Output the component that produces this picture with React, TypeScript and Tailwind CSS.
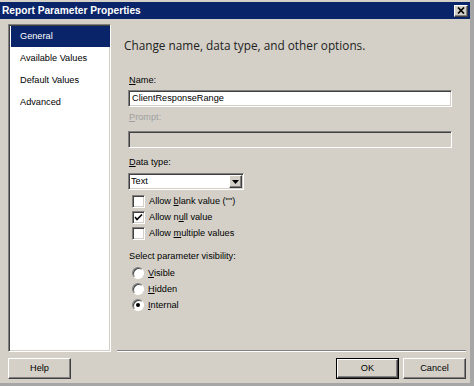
import React from 'react';

const raised =
  'border border-t-white border-l-white border-r-[#404040] border-b-[#404040] shadow-[inset_-1px_-1px_0_#808080]';
const sunken =
  'border border-t-[#808080] border-l-[#808080] border-r-white border-b-white shadow-[inset_1px_1px_0_#404040,inset_-1px_-1px_0_#d4d0c8]';

function U({ children }: { children: React.ReactNode }) {
  return <span className="underline underline-offset-[1px]">{children}</span>;
}

function Checkbox({ checked, children }: { checked?: boolean; children: React.ReactNode }) {
  return (
    <div className="flex h-[16px] items-center">
      <span className={`ml-[4px] flex h-[13px] w-[13px] shrink-0 items-center justify-center bg-white ${sunken}`}>
        {checked && (
          <svg width="9" height="9" viewBox="0 0 9 9" aria-hidden>
            <path d="M1 4 L3 6.5 L8 1.5" fill="none" stroke="#000" strokeWidth="1.6" />
          </svg>
        )}
      </span>
      <span className="ml-[4px]">{children}</span>
    </div>
  );
}

function Radio({ checked, children }: { checked?: boolean; children: React.ReactNode }) {
  return (
    <div className="flex h-[16px] items-center">
      <span className="ml-[4px] flex h-[12px] w-[12px] shrink-0 items-center justify-center rounded-full border border-t-[#808080] border-l-[#808080] border-r-white border-b-white bg-white shadow-[inset_1px_1px_0_#404040]">
        {checked && <span className="h-[4px] w-[4px] rounded-full bg-black" />}
      </span>
      <span className="ml-[4px]">{children}</span>
    </div>
  );
}

const navItems = ['General', 'Available Values', 'Default Values', 'Advanced'];

export default function App() {
  return (
    <div className="h-[386px] w-[474px] overflow-hidden bg-[#a6a6a6] font-['Liberation_Sans',Arial,sans-serif] text-[9.2px] leading-[13px] text-black">
      <div className="flex h-[383px] w-[470px] flex-col bg-[#d4d0c8]">
        {/* title bar */}
        <div className="mt-[2px] flex h-[17px] items-center justify-between bg-[#0a246a] pl-[2px] pr-[2px]">
          <span className="text-[10.2px] font-bold text-white">Report Parameter Properties</span>
          <button
            type="button"
            aria-label="Close"
            className={`flex h-[12px] w-[14px] items-center justify-center bg-[#d4d0c8] ${raised}`}
          >
            <svg width="8" height="7" viewBox="0 0 8 7" aria-hidden>
              <path d="M1 0.5 L7 6.5 M7 0.5 L1 6.5" stroke="#000" strokeWidth="1.7" />
            </svg>
          </button>
        </div>

        {/* body */}
        <div className="mt-[5px] flex h-[328px] pl-[8px] pr-[4px]">
          <ul className={`h-full w-[103px] bg-white py-[1px] pl-[2px] ${sunken}`}>
            {navItems.map((item, i) => (
              <li
                key={item}
                className={`flex items-center pl-[9px] ${
                  i === 0 ? 'h-[21px] bg-[#0a246a] text-white' : 'h-[22px]'
                }`}
              >
                {item}
              </li>
            ))}
          </ul>

          <div className="ml-[6px] flex h-full flex-1 flex-col border-b border-b-white shadow-[inset_0_-1px_0_#808080]">
            <h1 className="ml-[7px] mt-[12px] h-[18px] font-['Open_Sans',sans-serif] text-[11.8px] leading-[18px] text-[#222]">
              Change name, data type, and other options.
            </h1>

            <div className="ml-[11px] mr-[14px] flex flex-col">
              <label className="ml-[1px] mt-[20px]">
                <U>N</U>ame:
              </label>
              <div className={`mt-[3px] flex h-[17px] items-center bg-white pl-[3px] ${sunken}`}>
                ClientResponseRange
              </div>

              <label className="ml-[1px] mt-[4px] text-[#a0a0a0]">
                <U>P</U>rompt:
              </label>
              <div className={`mt-[7px] h-[17px] bg-[#d4d0c8] ${sunken}`} />

              <label className="ml-[1px] mt-[8px]">
                <U>D</U>ata type:
              </label>
              <div className={`mt-[4px] flex h-[17px] w-[116px] items-center justify-between bg-white pl-[2px] pr-[1px] ${sunken}`}>
                <span>Text</span>
                <span className={`flex h-[13px] w-[13px] items-center justify-center bg-[#d4d0c8] ${raised}`}>
                  <svg width="7" height="4" viewBox="0 0 7 4" aria-hidden>
                    <path d="M0 0 H7 L3.5 4 Z" fill="#000" />
                  </svg>
                </span>
              </div>

              <div className="mt-[3px] flex flex-col">
                <Checkbox>
                  Allow <U>b</U>lank value ("")
                </Checkbox>
                <Checkbox checked>
                  Allow n<U>u</U>ll value
                </Checkbox>
                <Checkbox>
                  Allow <U>m</U>ultiple values
                </Checkbox>
              </div>

              <div className="ml-[1px] mt-[9px]">Select parameter visibility:</div>
              <div className="mt-[2px] flex flex-col">
                <Radio>
                  <U>V</U>isible
                </Radio>
                <Radio>
                  <U>H</U>idden
                </Radio>
                <Radio checked>
                  <U>I</U>nternal
                </Radio>
              </div>
            </div>
          </div>
        </div>

        {/* buttons */}
        <div className="mt-[6px] flex items-center pl-[8px] pr-[4px]">
          <button type="button" className={`h-[21px] w-[63px] bg-[#d4d0c8] ${raised}`}>
            Help
          </button>
          <div className="flex-1" />
          <div className="border border-black">
            <button type="button" className={`block h-[19px] w-[61px] bg-[#d4d0c8] ${raised}`}>
              OK
            </button>
          </div>
          <button type="button" className={`ml-[4px] h-[21px] w-[63px] bg-[#d4d0c8] ${raised}`}>
            Cancel
          </button>
        </div>
      </div>
    </div>
  );
}
